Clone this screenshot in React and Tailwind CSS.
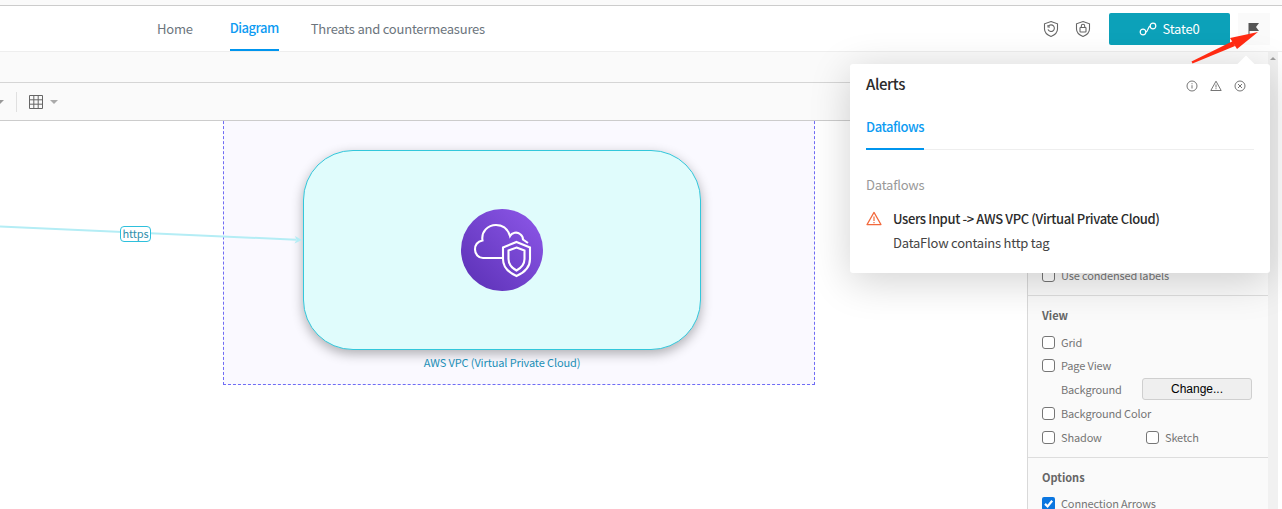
import React from "react";

const FONT = "font-['Noto_Sans_CJK_SC','Noto_Sans',sans-serif]";

function Check({ label, checked = false, className = "h-[24px]" }) {
  return (
    <div className={"flex items-center pt-[1px] " + className}>
      {checked ? (
        <span className="w-[13px] h-[13px] rounded-[2px] bg-[#0b76e0] flex items-center justify-center">
          <svg width="11" height="11" viewBox="0 0 12 12" fill="none" stroke="#fff" strokeWidth="2.4">
            <path d="M2.2 6.4 5 9.2 10 3" />
          </svg>
        </span>
      ) : (
        <span className="w-[13px] h-[13px] rounded-[3px] border border-[#767676] bg-white" />
      )}
      <span className="ml-[6px] text-[11px] tracking-[-0.15px] text-[#757575] leading-[13px]">{label}</span>
    </div>
  );
}

function ShieldHistory() {
  return (
    <svg width="16" height="18" viewBox="0 0 16 18" fill="none" stroke="#666" strokeWidth="1.1">
      <path d="M8 1.6 14.500 3.800V9c0 3.600-2.800 6-6.500 7.400C4.300 15 1.500 12.600 1.500 9V3.800Z" />
      <path d="M5.400 6.200A3.300 3.300 0 1 1 5 9.400" />
      <path d="M5 5v2h2" />
    </svg>
  );
}

function ShieldLock() {
  return (
    <svg width="16" height="18" viewBox="0 0 16 18" fill="none" stroke="#666" strokeWidth="1.1">
      <path d="M8 1.6 14.500 3.800V9c0 3.600-2.800 6-6.500 7.400C4.300 15 1.500 12.600 1.500 9V3.800Z" />
      <rect x="5" y="7.500" width="6" height="4.500" rx=".6" />
      <path d="M6.300 7.500V6a1.700 1.700 0 0 1 3.400 0v1.500" />
    </svg>
  );
}

function AwsIcon() {
  return (
    <div className="w-[82px] h-[82px] rounded-full bg-gradient-to-tr from-[#5a2fb4] to-[#8f58ea] flex items-center justify-center">
      <svg width="82" height="82" viewBox="0 0 82 82" fill="none" stroke="#fff" strokeWidth="2.100">
        <path d="M41 49H22C17.500 49 14 45 14 40.500 14 35.500 17 32.500 21.500 31.500 20 22.500 27 16 35 16 42 16 47 20.500 49 27 51 23.500 56 22.500 59 25 61 26.500 62 28.500 62 30.500L67 34" />
        <path d="M55.500 33 69 38.500V50C69 58.500 63.500 63.500 55.500 67 47.500 63.500 42 58.500 42 50V38.500Z" />
        <path d="M55.500 38.500 63.500 41.500V50C63.500 55.500 60 59 55.500 61.500 51 59 47.500 55.500 47.500 50V41.500Z" />
      </svg>
    </div>
  );
}

export default function App() {
  return (
    <div className={"relative w-full h-[509px] overflow-hidden bg-white flex flex-col " + FONT}>
      <div className="h-[6px] shrink-0 bg-[#fafafa] border-b border-[#cccccc]" />

      <header className="h-[46px] shrink-0 bg-white border-b border-[#eeeeee] flex items-center pl-[157px] pr-[12px]">
        <nav className="flex gap-[32px] h-full text-[13px] tracking-[-0.22px] text-[#6c757d]">
          <a className="flex items-center h-full pr-[5px]">Home</a>
          <a className="flex items-center h-full pt-[1px] font-medium tracking-[-0.5px] text-[#0d9bf2] border-b-2 border-[#0095ee] mb-[-1px]">Diagram</a>
          <a className="flex items-center h-full">Threats and countermeasures</a>
        </nav>
        <div className="ml-auto flex items-center">
          <ShieldHistory />
          <span className="w-[16px]" />
          <ShieldLock />
          <button className="ml-[18px] w-[121px] h-[32px] rounded-[2px] bg-[#0ca1b9] text-white text-[13px] tracking-[-0.2px] flex items-center justify-center gap-[5px]">
            <svg width="18" height="14" viewBox="0 0 18 14" fill="none" stroke="#fff" strokeWidth="1.200">
              <circle cx="4" cy="10" r="2.800" />
              <circle cx="14" cy="4" r="2.800" />
              <path d="M6.800 10C9.500 9.500 8.500 5 11.200 4.200" />
            </svg>
            State0
          </button>
          <button className="ml-[8px] w-[32px] h-[32px] bg-[#fafafa] flex items-center justify-center">
            <svg width="14" height="14" viewBox="0 0 14 14">
              <path d="M1.500 1h10.500L9 5l3 4H2.500v5h-1Z" fill="#555" />
            </svg>
          </button>
        </div>
      </header>

      <div className="flex-1 min-h-0 flex">
        <div className="flex-1 min-w-0 flex flex-col">
          <div className="h-[31px] shrink-0 bg-[#fafafa] border-b border-[#d5d5d5]" />
          <div className="h-[38px] shrink-0 bg-[#fafafa] border-b border-[#cccccc] flex items-center">
            <span className="w-0 h-0 border-x-[4px] border-x-transparent border-t-[4px] border-t-[#999] ml-[-4px]" />
            <span className="w-px h-[20px] bg-[#e0e0e0] ml-[12px]" />
            <svg className="ml-[12px]" width="14" height="14" viewBox="0 0 14 14" fill="none" stroke="#666" strokeWidth="1">
              <path d="M.5.500h13v13H.5ZM.5 4.800h13M.5 9.200h13M4.800.500v13M9.200.500v13" />
            </svg>
            <span className="ml-[7px] w-0 h-0 border-x-[4.500px] border-x-transparent border-t-[4.500px] border-t-[#aaa]" />
          </div>

          <div className="flex-1 min-h-0 flex">
            <div className="relative flex-1 min-w-0 overflow-hidden bg-white">
              <div className="absolute left-[223px] top-[-20px] w-[592px] h-[284px] bg-[#faf9ff] border border-dashed border-[#6f6cf5]" />
              <div className="absolute left-[303px] top-[29px] w-[398px] h-[200px] rounded-[50px] bg-[#e0fcfc] border border-[#33c7db] shadow-[0_4px_12px_rgba(0,0,0,0.3)] flex items-center justify-center">
                <AwsIcon />
              </div>
              <svg className="absolute left-0 top-[100px]" width="304" height="24" viewBox="0 0 304 24" fill="none">
                <path d="M0 5.500 296 18.700" stroke="#b4edf5" strokeWidth="2" />
                <path d="M302 19 294.500 22.500 296.500 19 295 15Z" fill="#b4edf5" />
              </svg>
              <div className="absolute left-[120px] top-[105px] w-[31px] h-[16px] rounded-[4px] border border-[#2ec0dc] bg-white text-[11px] tracking-[-0.1px] leading-[13px] text-[#3191ad] text-center">
                https
              </div>
              <div className="absolute left-[303px] top-[233px] w-[398px] text-center text-[11px] tracking-[-0.12px] leading-[16px] text-[#1c8fb6]">
                AWS VPC (Virtual Private Cloud)
              </div>
            </div>

            <aside className="w-[241px] shrink-0 overflow-hidden bg-[#fafafa] border-l border-[#d9d9d9] pl-[14px]">
              <div className="h-[175px] flex items-end border-b border-[#dddddd] -ml-[14px] pl-[14px] pb-[8px]">
                <Check label="Use condensed labels" />
              </div>
              <div className="pt-[11px]">
                <h3 className="text-[11px] font-semibold text-[#666] leading-[16px] mb-[7px]">View</h3>
                <Check label="Grid" className="h-[23px]" />
                <Check label="Page View" />
                <div className="flex items-center h-[24px] pl-[19px] text-[11px] tracking-[-0.15px] text-[#757575]">
                  <span className="w-[81px]">Background</span>
                  <button className="w-[110px] h-[22px] bg-[#efefef] border border-[#cfcfcf] rounded-[3px] text-[12px] tracking-normal text-black font-['Liberation_Sans',sans-serif] leading-none">
                    Change...
                  </button>
                </div>
                <Check label="Background Color" />
                <div className="flex">
                  <Check label="Shadow" className="h-[24px] w-[104px]" />
                  <Check label="Sketch" />
                </div>
              </div>
              <div className="mt-[8px] border-t border-[#dddddd] -ml-[14px] pl-[14px] pt-[11px]">
                <h3 className="text-[11px] font-semibold text-[#666] leading-[16px] mb-[6px]">Options</h3>
                <Check label="Connection Arrows" checked />
              </div>
            </aside>
          </div>
        </div>
        <div className="w-[10px] shrink-0 bg-[#f1f1f1] flex justify-center pt-[5px] mr-[4px]">
          <span className="w-0 h-0 border-x-[3px] border-x-transparent border-b-[3px] border-b-[#a0a0a0]" />
        </div>
      </div>

      <div className="absolute left-[850px] top-[64px] w-[420px] h-[209px] bg-white rounded-[3px] shadow-[0_8px_40px_rgba(0,0,0,0.18)] px-[16px]">
        <span className="absolute right-[18px] top-[-6px] w-[12px] h-[12px] rotate-45 bg-white" />
        <div className="relative flex items-center h-[42px] pt-[1px]">
          <h2 className="text-[15px] tracking-[-0.4px] font-medium text-[#2b2b2b] leading-none mb-[4px]">Alerts</h2>
          <div className="ml-auto flex items-center gap-[12px] pr-[8px]">
            <svg width="12" height="12" viewBox="0 0 12 12" fill="none" stroke="#666" strokeWidth=".9">
              <circle cx="6" cy="6" r="5" />
              <path d="M6 5.200v3.300M6 3.200v1" />
            </svg>
            <svg width="12" height="12" viewBox="0 0 12 12" fill="none" stroke="#666" strokeWidth=".9">
              <path d="M6 1.200 11.200 10.500H.8Z" />
              <path d="M6 4.500v3M6 8.200v1" />
            </svg>
            <svg width="12" height="12" viewBox="0 0 12 12" fill="none" stroke="#666" strokeWidth=".9">
              <circle cx="6" cy="6" r="5" />
              <path d="M4 4l4 4M8 4l-4 4" />
            </svg>
          </div>
        </div>
        <div className="relative h-[44px] border-b border-[#eeeeee]">
          <span className="inline-flex items-center h-[44px] text-[13px] tracking-[-0.42px] font-medium text-[#0d9bf2] border-b-2 border-[#0095ee]">Dataflows</span>
        </div>
        <div className="mt-[25px] text-[13px] tracking-[-0.2px] leading-[20px] text-[#999]">Dataflows</div>
        <div className="mt-[14px] flex">
          <svg className="mt-[2px] shrink-0" width="16" height="15" viewBox="0 0 16 15" fill="none" stroke="#f2693c" strokeWidth="1.200">
            <path d="M8 1.400 15 13.600H1Z" strokeLinejoin="round" />
            <path d="M8 5.500v4.500M8 11v1.200" />
          </svg>
          <div className="ml-[11px]">
            <div className="text-[13px] tracking-[-0.37px] font-medium text-[#2b2b2b] leading-[20px]">Users Input -&gt; AWS VPC (Virtual Private Cloud)</div>
            <div className="mt-[4px] text-[13px] tracking-[-0.22px] text-[#444] leading-[20px]">DataFlow contains http tag</div>
          </div>
        </div>
      </div>

      <svg className="absolute left-[1188px] top-[26px]" width="76" height="40" viewBox="0 0 76 40">
        <path d="M70 6 49 23 42 12Z" fill="#ff2a12" />
        <path d="M3.500 35.500 4.500 37.500 47 20 45 15Z" fill="#ff2a12" />
      </svg>
    </div>
  );
}
